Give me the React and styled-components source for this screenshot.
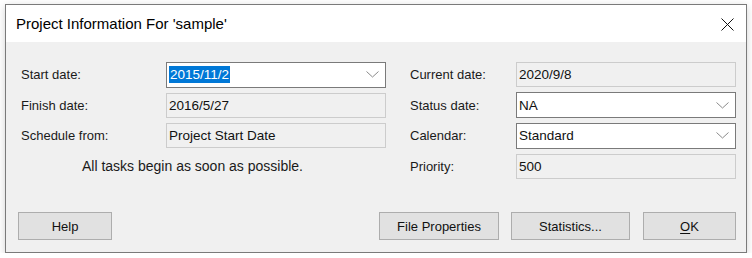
import React from "react";
import styled, { createGlobalStyle } from "styled-components";

const Global = createGlobalStyle`
  body {
    margin: 0;
    background: #ffffff;
    font-family: "Liberation Sans", Arial, sans-serif;
  }
`;

const Window = styled.div`
  margin: 4px 0 0 5px;
  width: 742px;
  height: 249px;
  box-sizing: border-box;
  border: 1px solid #7a7a7a;
  box-shadow: 0 2px 8px rgba(0, 0, 0, 0.18);
  display: flex;
  flex-direction: column;
`;

const TitleBar = styled.div`
  height: 37px;
  flex-shrink: 0;
  background: #ffffff;
  display: flex;
  align-items: center;
  justify-content: space-between;
  padding: 0 12px 0 10px;
  font-size: 15px;
  color: #000;
`;

const Close = styled.div`
  width: 13px;
  height: 13px;
  display: flex;
  margin-top: 1px;
`;

const Body = styled.div`
  flex: 1;
  background: #f0f0f0;
  padding: 20px 9px 12px 15px;
  display: flex;
  flex-direction: column;
`;

const Form = styled.div`
  display: flex;
  gap: 24px;
`;

const Column = styled.div`
  display: flex;
  flex-direction: column;
`;

const Grid = styled.div`
  display: grid;
  grid-template-columns: ${(p) => p.$label}px 220px;
  grid-auto-rows: 25px;
  row-gap: 5.5px;
  align-items: center;
`;

const Label = styled.div`
  font-size: 13px;
  color: #1a1a1a;
`;

const Field = styled.div`
  height: ${(p) => (p.$edit ? 26 : 25)}px;
  box-sizing: border-box;
  display: flex;
  align-items: center;
  justify-content: space-between;
  padding: 0 6px 0 2px;
  font-size: 13.5px;
  color: #111;
  background: ${(p) => (p.$edit ? "#ffffff" : "#f0f0f0")};
  border: 1px solid ${(p) => (p.$edit ? "#7a7a7a" : "#cccccc")};
`;

const Selected = styled.span`
  background: #0078d7;
  color: #ffffff;
  padding: 1px 1px;
`;

const Note = styled.div`
  margin-top: 10px;
  padding-left: 61px;
  font-size: 14px;
  color: #1a1a1a;
  line-height: 16px;
`;

const Buttons = styled.div`
  margin-top: auto;
  margin-left: -3px;
  display: flex;
  align-items: center;
`;

const Button = styled.div`
  width: ${(p) => p.$w}px;
  height: 28px;
  box-sizing: border-box;
  margin-left: ${(p) => p.$ml || 0}px;
  background: #e1e1e1;
  border: 1px solid #adadad;
  display: flex;
  align-items: center;
  justify-content: center;
  font-size: 13px;
  color: #111;
  u {
    text-decoration: underline;
    text-underline-offset: 2px;
  }
`;

function Chevron() {
  return (
    <svg width="13" height="7" viewBox="0 0 13 7">
      <path d="M0.5 0.5 L6.5 6 L12.5 0.5" fill="none" stroke="#8a8a8a" strokeWidth="1" />
    </svg>
  );
}

function Combo({ children }) {
  return (
    <Field $edit>
      <span>{children}</span>
      <Chevron />
    </Field>
  );
}

export default function App() {
  return (
    <>
      <Global />
      <Window>
        <TitleBar>
          <span>Project Information For 'sample'</span>
          <Close>
            <svg width="13" height="13" viewBox="0 0 13 13">
              <path d="M0.5 0.5 L12.5 12.5 M12.5 0.5 L0.5 12.5" stroke="#111" strokeWidth="1" />
            </svg>
          </Close>
        </TitleBar>
        <Body>
          <Form>
            <Column>
              <Grid $label={145}>
                <Label>Start date:</Label>
                <Combo>
                  <Selected>2015/11/2</Selected>
                </Combo>
                <Label>Finish date:</Label>
                <Field>2016/5/27</Field>
                <Label>Schedule from:</Label>
                <Field>Project Start Date</Field>
              </Grid>
              <Note>All tasks begin as soon as possible.</Note>
            </Column>
            <Column>
              <Grid $label={106}>
                <Label>Current date:</Label>
                <Field>2020/9/8</Field>
                <Label>Status date:</Label>
                <Combo>NA</Combo>
                <Label>Calendar:</Label>
                <Combo>Standard</Combo>
                <Label>Priority:</Label>
                <Field>500</Field>
              </Grid>
            </Column>
          </Form>
          <Buttons>
            <Button $w={94}>Help</Button>
            <Button $w={120} $ml={267}>File Properties</Button>
            <Button $w={119} $ml={12}>Statistics...</Button>
            <Button $w={93} $ml={13}>
              <u>O</u>K
            </Button>
          </Buttons>
        </Body>
      </Window>
    </>
  );
}
